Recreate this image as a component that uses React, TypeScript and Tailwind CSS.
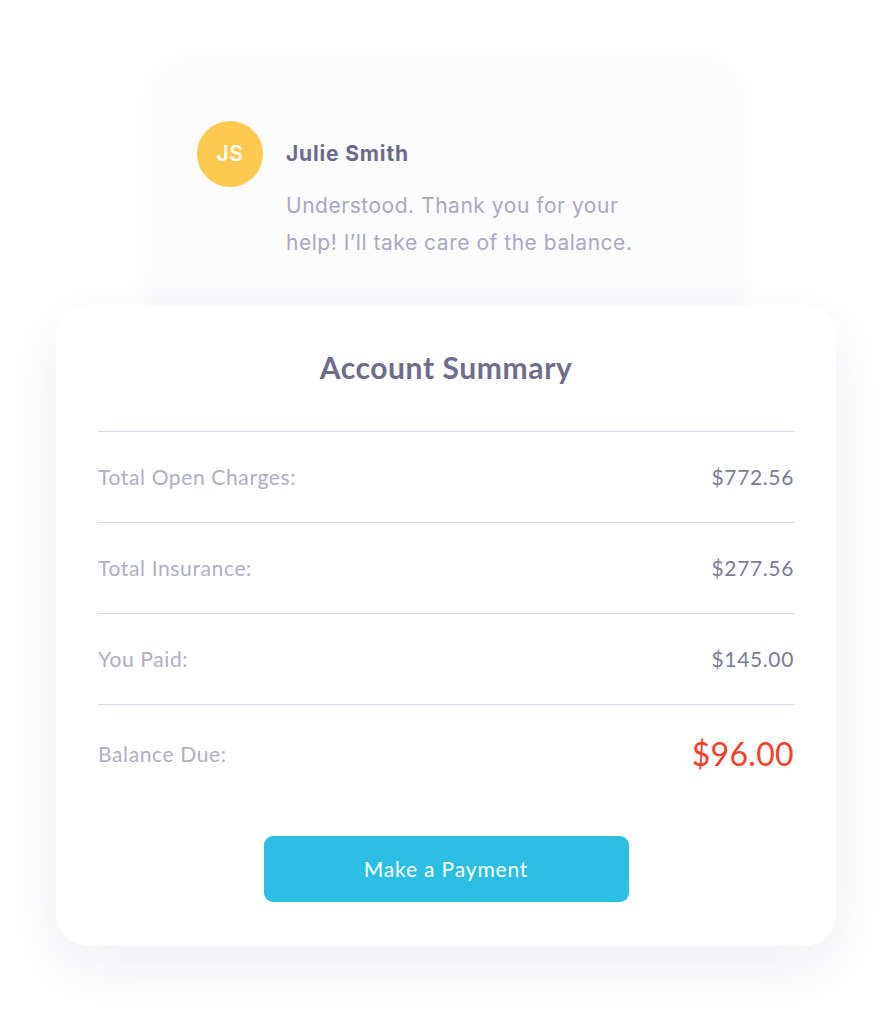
const rows = [
  { label: 'Total Open Charges:', value: '$772.56' },
  { label: 'Total Insurance:', value: '$277.56' },
  { label: 'You Paid:', value: '$145.00' },
];

const App = () => {
  return (
    <div className="w-[892px] h-[1024px] bg-white overflow-hidden">
      {/* Chat bubble behind the card */}
      <div className="ml-[152px] mt-[60px] w-[588px] h-[245px] rounded-t-[40px] bg-[#fcfcfd] shadow-[0_0_30px_rgba(60,60,120,0.03)] pl-[45px] pt-[61px] font-['Inter','Open_Sans',sans-serif]">
        <div className="flex gap-[23px]">
          <div className="w-[66px] h-[66px] shrink-0 rounded-full bg-[#fdc94f] flex items-center justify-center text-white text-[21px] font-semibold tracking-[0.03em]">
            JS
          </div>
          <div>
            <div className="h-[66px] flex items-center text-[21px] font-bold text-[#6b6a88] tracking-[0.04em]">Julie Smith</div>
            <p className="text-[21px] leading-[37px] text-[#aaa9c0] w-[370px] tracking-[0.025em]">
              Understood. Thank you for your help! I’ll take care of the balance.
            </p>
          </div>
        </div>
      </div>

      {/* Account summary card */}
      <div className="ml-[56px] w-[780px] h-[641px] rounded-[32px] bg-white shadow-[0_20px_60px_rgba(70,70,130,0.08)] px-[42px] pt-[45px] font-['Lato',sans-serif]">
        <h2 className="text-center text-[30px] leading-[34px] font-bold text-[#6e6d8b] tracking-[0.02em] mb-[47px]">Account Summary</h2>
        {rows.map((row) => (
          <div key={row.label} className="h-[91px] border-t border-[#d6dcea] flex items-center justify-between">
            <span className="text-[21px] text-[#b0afc4] tracking-[0.03em]">{row.label}</span>
            <span className="text-[21px] text-[#7d7c97] tracking-[0.03em]">{row.value}</span>
          </div>
        ))}
        <div className="h-[98px] border-t border-[#d6dcea] flex items-center justify-between">
          <span className="text-[21px] text-[#b0afc4] tracking-[0.03em]">Balance Due:</span>
          <span className="text-[32px] text-[#f5412c] tracking-[0.01em]">$96.00</span>
        </div>
        <div className="flex justify-center mt-[34px]">
          <button className="w-[365px] h-[66px] rounded-[9px] bg-[#2cbfe3] text-white text-[21px] tracking-[0.04em]">Make a Payment</button>
        </div>
      </div>
    </div>
  );
};

export default App;
